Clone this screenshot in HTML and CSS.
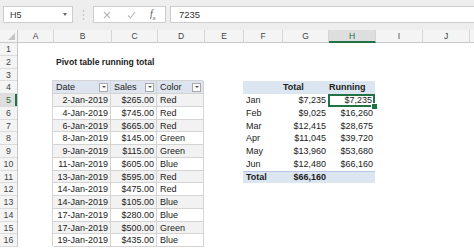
FILE: index.html
```html
<!DOCTYPE html>
<html lang="en">
<head>
    <meta charset="UTF-8">
    <meta name="viewport" content="width=device-width, initial-scale=1.0">
    <title>Pivot table running total</title>
    <link rel="stylesheet" href="styles.css">
</head>
<body>
    <div class="formula-bar">
        <div class="name-box">
            <span>H5</span>
            <span class="caret"></span>
        </div>
        <div class="grip">
            <svg width="3" height="12" viewBox="0 0 3 12"><circle cx="1.5" cy="2" r="0.8" fill="#b5b5b5"/><circle cx="1.5" cy="6" r="0.8" fill="#b5b5b5"/><circle cx="1.5" cy="10" r="0.8" fill="#b5b5b5"/></svg>
        </div>
        <div class="fx-box">
            <svg class="fx-icon" width="8" height="8" viewBox="0 0 8 8"><path d="M1 1 L7 7 M7 1 L1 7" stroke="#b8b8b8" stroke-width="1.1" fill="none"/></svg>
            <svg class="fx-icon" width="9" height="8" viewBox="0 0 9 8"><path d="M1 4.5 L3.5 7 L8 1" stroke="#b8b8b8" stroke-width="1.1" fill="none"/></svg>
            <span class="fx-label"><i>f</i><sub>x</sub></span>
        </div>
        <div class="formula-input">7235</div>
    </div>

    <div class="col-heads">
        <div class="corner">
            <svg width="7" height="7" viewBox="0 0 7 7"><path d="M7 0 L7 7 L0 7 Z" fill="#c4c4c4"/></svg>
        </div>
        <div class="col-head w-a">A</div>
        <div class="col-head w-b">B</div>
        <div class="col-head w-c">C</div>
        <div class="col-head w-d">D</div>
        <div class="col-head w-e">E</div>
        <div class="col-head w-f">F</div>
        <div class="col-head w-g">G</div>
        <div class="col-head w-h selected">H</div>
        <div class="col-head w-i">I</div>
        <div class="col-head w-j">J</div>
        <div class="col-head rest"></div>
    </div>

    <div class="sheet">
        <div class="row-heads">
            <div class="row-head">1</div>
            <div class="row-head">2</div>
            <div class="row-head">3</div>
            <div class="row-head">4</div>
            <div class="row-head selected">5</div>
            <div class="row-head">6</div>
            <div class="row-head">7</div>
            <div class="row-head">8</div>
            <div class="row-head">9</div>
            <div class="row-head">10</div>
            <div class="row-head">11</div>
            <div class="row-head">12</div>
            <div class="row-head">13</div>
            <div class="row-head">14</div>
            <div class="row-head">15</div>
            <div class="row-head">16</div>
        </div>

        <div class="cells">
            <div class="title">Pivot table running total</div>

            <div class="data-table">
                <div class="tr head">
                    <div class="th">Date<span class="filter"></span></div>
                    <div class="th">Sales<span class="filter"></span></div>
                    <div class="th">Color<span class="filter"></span></div>
                </div>
                <div class="tr band"><div class="r">2-Jan-2019</div><div class="r">$265.00</div><div>Red</div></div>
                <div class="tr"><div class="r">4-Jan-2019</div><div class="r">$745.00</div><div>Red</div></div>
                <div class="tr band"><div class="r">6-Jan-2019</div><div class="r">$665.00</div><div>Red</div></div>
                <div class="tr"><div class="r">8-Jan-2019</div><div class="r">$145.00</div><div>Green</div></div>
                <div class="tr band"><div class="r">9-Jan-2019</div><div class="r">$115.00</div><div>Green</div></div>
                <div class="tr"><div class="r">11-Jan-2019</div><div class="r">$605.00</div><div>Blue</div></div>
                <div class="tr band"><div class="r">13-Jan-2019</div><div class="r">$595.00</div><div>Red</div></div>
                <div class="tr"><div class="r">14-Jan-2019</div><div class="r">$475.00</div><div>Red</div></div>
                <div class="tr band"><div class="r">14-Jan-2019</div><div class="r">$105.00</div><div>Blue</div></div>
                <div class="tr"><div class="r">17-Jan-2019</div><div class="r">$280.00</div><div>Blue</div></div>
                <div class="tr band"><div class="r">17-Jan-2019</div><div class="r">$500.00</div><div>Green</div></div>
                <div class="tr"><div class="r">19-Jan-2019</div><div class="r">$435.00</div><div>Blue</div></div>
            </div>

            <div class="pivot">
                <div class="tr head"><div></div><div>Total</div><div>Running</div></div>
                <div class="tr"><div>Jan</div><div class="r">$7,235</div><div class="r active">$7,235</div></div>
                <div class="tr"><div>Feb</div><div class="r">$9,025</div><div class="r">$16,260</div></div>
                <div class="tr"><div>Mar</div><div class="r">$12,415</div><div class="r">$28,675</div></div>
                <div class="tr"><div>Apr</div><div class="r">$11,045</div><div class="r">$39,720</div></div>
                <div class="tr"><div>May</div><div class="r">$13,960</div><div class="r">$53,680</div></div>
                <div class="tr"><div>Jun</div><div class="r">$12,480</div><div class="r">$66,160</div></div>
                <div class="tr total"><div>Total</div><div class="r">$66,160</div><div></div></div>
            </div>
        </div>
    </div>
</body>
</html>
```

FILE: styles.css
```css
* {
    box-sizing: border-box;
}
body {
    margin: 0;
    background-color: #ffffff;
    color: #222222;
    font-family: "Liberation Sans", Arial, sans-serif;
    font-size: 9px;
    overflow: hidden;
}

/* Formula bar */
.formula-bar {
    height: 30px;
    background-color: #eeeeee;
    display: flex;
    align-items: flex-start;
    padding: 6px 0 0 3px;
}
.name-box {
    width: 70px;
    height: 17px;
    background-color: #ffffff;
    border: 1px solid #cdcdcd;
    display: flex;
    align-items: center;
    justify-content: space-between;
    padding: 0 5px 0 6px;
    font-size: 9px;
    color: #333333;
}
.caret {
    width: 0;
    height: 0;
    border-left: 2.5px solid transparent;
    border-right: 2.5px solid transparent;
    border-top: 3px solid #666666;
}
.grip {
    width: 20px;
    height: 17px;
    display: flex;
    align-items: center;
    justify-content: center;
}
.fx-box {
    width: 73px;
    height: 17px;
    background-color: #ffffff;
    border: 1px solid #cdcdcd;
    display: flex;
    align-items: center;
    padding-left: 9px;
    gap: 16px;
}
.fx-label {
    font-family: "Liberation Serif", serif;
    font-size: 10px;
    color: #555555;
    margin-left: -2px;
}
.fx-label sub {
    font-size: 6px;
    font-style: italic;
}
.formula-input {
    flex: 1;
    height: 17px;
    margin-left: 4px;
    margin-right: -4px;
    background-color: #ffffff;
    border: 1px solid #cdcdcd;
    font-size: 9.5px;
    color: #333333;
    padding-left: 8px;
    line-height: 15px;
}

/* Column headers */
.col-heads {
    display: flex;
    height: 13px;
    background-color: #f4f4f4;
}
.corner {
    width: 18px;
    border-right: 1px solid #c8c8c8;
    border-bottom: 1px solid #c8c8c8;
    display: flex;
    align-items: flex-end;
    justify-content: flex-end;
    padding: 0 2px 2px 0;
}
.col-head {
    border-right: 1px solid #d6d6d6;
    border-bottom: 1px solid #c8c8c8;
    text-align: center;
    line-height: 12px;
    color: #444444;
    font-size: 8.5px;
}
.col-head.selected {
    background-color: #dedede;
    border-bottom: 2px solid #217346;
    color: #217346;
}
.col-head.rest {
    flex: 1;
    border-right: none;
}
.w-a { width: 36px; }
.w-b { width: 58px; }
.w-c { width: 46px; }
.w-d { width: 47px; }
.w-e { width: 39px; }
.w-f { width: 39px; }
.w-g { width: 46px; }
.w-h { width: 47px; }
.w-i { width: 47px; }
.w-j { width: 47px; }

/* Sheet body */
.sheet {
    display: flex;
}
.row-heads {
    width: 18px;
    background-color: #f4f4f4;
    border-right: 1px solid #c8c8c8;
}
.row-head {
    height: 12.75px;
    line-height: 12.75px;
    border-bottom: 1px solid #dcdcdc;
    text-align: center;
    color: #444444;
    font-size: 8.8px;
}
.row-head.selected {
    background-color: #dedede;
    box-shadow: inset -2px 0 0 #217346;
    color: #217346;
}
.cells {
    flex: 1;
    display: grid;
    grid-template-columns: 35px 58px 46px 47px 39px 39px 46px 47px 47px 47px 1fr;
    grid-template-rows: repeat(16, 12.75px);
}
.title {
    grid-row: 2;
    grid-column: 2 / 6;
    font-weight: bold;
    font-size: 8.6px;
    line-height: 12.75px;
    padding-left: 3px;
}

.tr {
    display: contents;
}
.data-table,
.pivot {
    display: grid;
    grid-auto-rows: 12.75px;
    line-height: 12.75px;
}
.data-table > .tr > div,
.pivot > .tr > div {
    padding: 0 2px 0 3px;
    white-space: nowrap;
}
.r {
    text-align: right;
}

/* Source table */
.data-table {
    grid-row: 4 / 17;
    grid-column: 2 / 5;
    grid-template-columns: 58px 46px 47px;
    box-shadow: -1px -1px 0 #d4d4d4;
}
.data-table > .tr > div {
    border-right: 1px solid #d4d4d4;
    border-bottom: 1px solid #d4d4d4;
}
.data-table .head > div {
    background-color: #dde3ef;
    display: flex;
    align-items: center;
    justify-content: space-between;
}
.data-table .band > div {
    background-color: #f2f2f2;
}
.filter {
    width: 9px;
    height: 9px;
    border: 1px solid #a9a9a9;
    background-color: #fafafa;
    display: flex;
    align-items: center;
    justify-content: center;
}
.filter::after {
    content: "";
    border-left: 2px solid transparent;
    border-right: 2px solid transparent;
    border-top: 2.5px solid #555555;
}

/* Pivot table */
.pivot {
    grid-row: 4 / 12;
    grid-column: 6 / 9;
    grid-template-columns: 39px 46px 47px;
}
.pivot .head > div,
.pivot .total > div {
    background-color: #dce6f1;
    font-weight: bold;
}
.pivot .head > div {
    padding-left: 1px;
}
.pivot .total > div {
    box-shadow: inset 0 1px 0 #b4c7e7;
}
.pivot > .tr > .active {
    position: relative;
    padding-right: 3px;
    box-shadow: inset 0 0 0 2px #217346;
}
.pivot .active::after {
    content: "";
    position: absolute;
    right: -3px;
    bottom: -3px;
    width: 5px;
    height: 5px;
    background-color: #217346;
    border: 1px solid #ffffff;
}
```
